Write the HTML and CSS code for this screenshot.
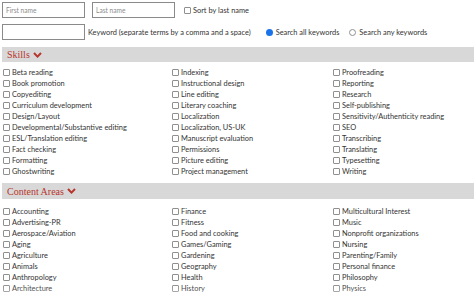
FILE: index.html
```html
<!DOCTYPE html>
<html lang="en">
<head>
    <meta charset="UTF-8">
    <meta name="viewport" content="width=device-width, initial-scale=1.0">
    <title>Directory Search</title>
    <link rel="stylesheet" href="styles.css">
</head>
<body>
    <form class="search">
        <div class="row">
            <input class="field" type="text" placeholder="First name">
            <input class="field" type="text" placeholder="Last name">
            <label class="opt sort"><input type="checkbox" class="box"> Sort by last name</label>
        </div>
        <div class="row row-kw">
            <input class="field" type="text">
            <span class="kw-label">Keyword (separate terms by a comma and a space)</span>
            <label class="opt radio-opt"><input type="radio" name="mode" class="dot" checked> Search all keywords</label>
            <label class="opt radio-opt any"><input type="radio" name="mode" class="dot"> Search any keywords</label>
        </div>

        <h2 class="section">Skills
            <svg class="chev" width="9" height="6" viewBox="0 0 9 6"><polyline points="1,1 4.5,4.6 8,1" fill="none" stroke="#b8352e" stroke-width="2"/></svg>
        </h2>
        <div class="grid">
            <label class="opt"><input type="checkbox" class="box">Beta reading</label>
            <label class="opt"><input type="checkbox" class="box">Indexing</label>
            <label class="opt"><input type="checkbox" class="box">Proofreading</label>
            <label class="opt"><input type="checkbox" class="box">Book promotion</label>
            <label class="opt"><input type="checkbox" class="box">Instructional design</label>
            <label class="opt"><input type="checkbox" class="box">Reporting</label>
            <label class="opt"><input type="checkbox" class="box">Copyediting</label>
            <label class="opt"><input type="checkbox" class="box">Line editing</label>
            <label class="opt"><input type="checkbox" class="box">Research</label>
            <label class="opt"><input type="checkbox" class="box">Curriculum development</label>
            <label class="opt"><input type="checkbox" class="box">Literary coaching</label>
            <label class="opt"><input type="checkbox" class="box">Self-publishing</label>
            <label class="opt"><input type="checkbox" class="box">Design/Layout</label>
            <label class="opt"><input type="checkbox" class="box">Localization</label>
            <label class="opt"><input type="checkbox" class="box">Sensitivity/Authenticity reading</label>
            <label class="opt"><input type="checkbox" class="box">Developmental/Substantive editing</label>
            <label class="opt"><input type="checkbox" class="box">Localization, US-UK</label>
            <label class="opt"><input type="checkbox" class="box">SEO</label>
            <label class="opt"><input type="checkbox" class="box">ESL/Translation editing</label>
            <label class="opt"><input type="checkbox" class="box">Manuscript evaluation</label>
            <label class="opt"><input type="checkbox" class="box">Transcribing</label>
            <label class="opt"><input type="checkbox" class="box">Fact checking</label>
            <label class="opt"><input type="checkbox" class="box">Permissions</label>
            <label class="opt"><input type="checkbox" class="box">Translating</label>
            <label class="opt"><input type="checkbox" class="box">Formatting</label>
            <label class="opt"><input type="checkbox" class="box">Picture editing</label>
            <label class="opt"><input type="checkbox" class="box">Typesetting</label>
            <label class="opt"><input type="checkbox" class="box">Ghostwriting</label>
            <label class="opt"><input type="checkbox" class="box">Project management</label>
            <label class="opt"><input type="checkbox" class="box">Writing</label>
        </div>

        <h2 class="section">Content Areas
            <svg class="chev" width="9" height="6" viewBox="0 0 9 6"><polyline points="1,1 4.5,4.6 8,1" fill="none" stroke="#b8352e" stroke-width="2"/></svg>
        </h2>
        <div class="grid">
            <label class="opt"><input type="checkbox" class="box">Accounting</label>
            <label class="opt"><input type="checkbox" class="box">Finance</label>
            <label class="opt"><input type="checkbox" class="box">Multicultural Interest</label>
            <label class="opt"><input type="checkbox" class="box">Advertising-PR</label>
            <label class="opt"><input type="checkbox" class="box">Fitness</label>
            <label class="opt"><input type="checkbox" class="box">Music</label>
            <label class="opt"><input type="checkbox" class="box">Aerospace/Aviation</label>
            <label class="opt"><input type="checkbox" class="box">Food and cooking</label>
            <label class="opt"><input type="checkbox" class="box">Nonprofit organizations</label>
            <label class="opt"><input type="checkbox" class="box">Aging</label>
            <label class="opt"><input type="checkbox" class="box">Games/Gaming</label>
            <label class="opt"><input type="checkbox" class="box">Nursing</label>
            <label class="opt"><input type="checkbox" class="box">Agriculture</label>
            <label class="opt"><input type="checkbox" class="box">Gardening</label>
            <label class="opt"><input type="checkbox" class="box">Parenting/Family</label>
            <label class="opt"><input type="checkbox" class="box">Animals</label>
            <label class="opt"><input type="checkbox" class="box">Geography</label>
            <label class="opt"><input type="checkbox" class="box">Personal finance</label>
            <label class="opt"><input type="checkbox" class="box">Anthropology</label>
            <label class="opt"><input type="checkbox" class="box">Health</label>
            <label class="opt"><input type="checkbox" class="box">Philosophy</label>
            <label class="opt"><input type="checkbox" class="box">Architecture</label>
            <label class="opt"><input type="checkbox" class="box">History</label>
            <label class="opt"><input type="checkbox" class="box">Physics</label>
        </div>
    </form>
    <div class="fade"></div>
</body>
</html>
```
FILE: styles.css
```css
body {
    margin: 0;
    font-family: Lato, "Open Sans", sans-serif;
    font-size: 7.4px;
    color: #333;
    background: #fff;
    overflow: hidden;
}
.search {
    padding: 2px 0 0 2px;
}
.row {
    display: flex;
    align-items: center;
    height: 16px;
}
.row-kw {
    margin-top: 6px;
}
.field {
    box-sizing: border-box;
    width: 83px;
    height: 16px;
    margin: 0 7px 0 0;
    padding: 0 3px;
    border: 1px solid #8a8a8a;
    border-radius: 0;
    font-family: inherit;
    font-size: 6.6px;
    color: #333;
}
.field::placeholder {
    color: #8c8c8c;
}
.row-kw .field {
    margin-right: 3px;
}
.kw-label {
    margin-right: 15px;
}
.opt {
    display: flex;
    align-items: center;
    white-space: nowrap;
    height: 11px;
}
.sort {
    margin-left: 1px;
}
.any {
    margin-left: 10px;
}
.box {
    appearance: none;
    box-sizing: border-box;
    width: 7px;
    height: 7px;
    margin: 0 2px 0 1px;
    border: 1px solid #8f8f8f;
    border-radius: 1px;
    background: #fff;
}
.dot {
    appearance: none;
    box-sizing: border-box;
    width: 7px;
    height: 7px;
    margin: 0 3px 0 0;
    border: 1px solid #8f8f8f;
    border-radius: 50%;
    background: #fff;
}
.dot:checked {
    border: 2px solid #1a73e8;
    background: #1a73e8;
}
.section {
    display: flex;
    align-items: center;
    height: 15px;
    margin: 7px 0 5px 0;
    padding-left: 5px;
    background: #d8d8d8;
    font-family: "Liberation Serif", serif;
    font-weight: normal;
    font-size: 10px;
    color: #b8352e;
}
.chev {
    margin-left: 3px;
}
.grid + .section {
    margin-top: 6px;
    height: 16px;
    margin-bottom: 7px;
}
.grid {
    display: grid;
    grid-template-columns: 169px 161px 1fr;
    grid-auto-rows: 11px;
}
.fade {
    position: fixed;
    left: 0;
    right: 0;
    bottom: 0;
    height: 12px;
    background: linear-gradient(rgba(255, 255, 255, 0), rgba(255, 255, 255, 0.35));
}
```
